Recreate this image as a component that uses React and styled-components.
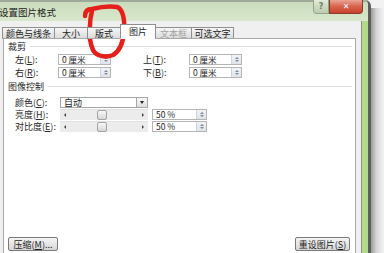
import React from "react";
import styled, { createGlobalStyle } from "styled-components";

const GlobalStyle = createGlobalStyle`
  html, body { margin: 0; padding: 0; }
  body {
    font-family: "Noto Sans CJK SC", "Liberation Sans", sans-serif;
    color: #1e1e1e;
  }
`;

const Screen = styled.div`
  position: relative;
  width: 384px;
  height: 253px;
  overflow: hidden;
  display: flex;
  align-items: flex-start;
  background: #f2f2f2;
`;

const Window = styled.div`
  width: 371px;
  flex: none;
  display: flex;
  flex-direction: column;
  border-right: 3px solid #5c5f5a;
  border-top-right-radius: 6px;
  background: #c6e4a6;
  box-sizing: border-box;
`;

const Shadow = styled.div`
  flex: 1;
  align-self: stretch;
  margin-top: 8px;
  background: linear-gradient(to right, #9b9b9b, #d9d9d9 45%, #f2f2f2);
`;

const TitleBar = styled.div`
  height: 21px;
  display: flex;
  align-items: flex-start;
  background: linear-gradient(#9ea99a 0 2px, #cbdcbd 2px, #d9e8cc 100%);
  border-top-right-radius: 5px;
`;

const Title = styled.div`
  margin-left: -1px;
  margin-top: 6px;
  font-size: 9.5px;
  line-height: 12px;
  color: #1c1c1c;
`;

const Captions = styled.div`
  margin-left: auto;
  margin-right: 5px;
  display: flex;
`;

const CaptionButton = styled.div`
  width: ${p => p.$w}px;
  height: 14px;
  box-sizing: border-box;
  display: flex;
  align-items: center;
  justify-content: center;
  font: bold 8px "DejaVu Sans", sans-serif;
  color: ${p => (p.$close ? "#fff" : "#6b7a66")};
  border: 1px solid ${p => (p.$close ? "#8d3a2c" : "#93a38c")};
  border-top: none;
  background: ${p =>
    p.$close
      ? "linear-gradient(#eaa596, #d7634d 50%, #c9412b)"
      : "linear-gradient(#e3ecda, #cbdac0 50%, #bccdb0)"};
  border-radius: ${p => (p.$close ? "0 0 4px 0" : "0 0 0 4px")};
`;

const ClientRow = styled.div`
  display: flex;
  padding-right: 6px;
  background: linear-gradient(to right, #c2e4a0, #b0dc86);
`;

const Body = styled.div`
  width: 362px;
  box-sizing: border-box;
  background: #f0f0f0;
  border-right: 1px solid #8d8d8d;
  padding: 3px 5px 0 2px;
  display: flex;
  flex-direction: column;
`;

const TabRow = styled.div`
  display: flex;
  align-items: flex-end;
  height: 15px;
  margin-bottom: -1px;
  position: relative;
  z-index: 1;
`;

const Tab = styled.div`
  width: ${p => p.$w}px;
  height: ${p => (p.$active ? 15 : 12)}px;
  box-sizing: border-box;
  display: flex;
  align-items: center;
  justify-content: center;
  font-size: 9px;
  line-height: 10px;
  color: ${p => (p.$disabled ? "#a3a3a3" : "#1e1e1e")};
  border: 1px solid #8f8f8f;
  border-bottom: ${p => (p.$active ? "1px solid #fff" : "1px solid #a9a9a9")};
  margin-right: -1px;
  background: ${p =>
    p.$active ? "#fff" : "linear-gradient(#f6f6f6, #e6e6e6 60%, #dcdcdc)"};
  padding-top: ${p => (p.$active ? 0 : 1)}px;
`;

const Panel = styled.div`
  margin-left: 1px;
  height: 222px;
  box-sizing: border-box;
  background: #fff;
  border: 1px solid #a9a9a9;
  padding: 1px 5px 8px 4px;
  display: flex;
  flex-direction: column;
`;

const SectionHead = styled.div`
  display: flex;
  align-items: center;
  gap: 4px;
  height: 12px;
  font-size: 9px;
  margin-top: ${p => p.$top || 0}px;
  &::after {
    content: "";
    flex: 1;
    height: 1px;
    margin-right: -2px;
    background: #dcdcdc;
  }
`;

const CropGrid = styled.div`
  display: grid;
  grid-template-columns: 43px 53px 32px 46px 53px;
  grid-auto-rows: 11px;
  row-gap: 2px;
  margin: 2px 0 0 7px;
`;

const ImageGrid = styled.div`
  display: grid;
  grid-template-columns: 45px 88px 4px 55px;
  grid-template-rows: 11px 11px 11px;
  row-gap: 1px;
  margin: 5px 0 0 7px;
  & > :nth-child(-n + 2) {
    margin-bottom: 4px;
  }
`;

const Label = styled.div`
  font-size: 9px;
  line-height: 11px;
  white-space: nowrap;
  color: #262626;
  u {
    text-underline-offset: 1px;
  }
`;

const SpinBox = styled.div`
  display: flex;
  height: 11px;
  box-sizing: border-box;
  border: 1px solid #b5b5b5;
  background: #fff;
`;

const SpinText = styled.div`
  flex: 1;
  padding-left: 3px;
  font-size: 8.5px;
  line-height: 9px;
  white-space: nowrap;
`;

const SpinArrows = styled.div`
  width: 9px;
  display: flex;
  flex-direction: column;
  align-items: center;
  justify-content: center;
  gap: 1px;
  background: linear-gradient(#f1f3f6, #dfe3e9);
  border-left: 1px solid #d0d4da;
`;

const Tri = styled.div`
  width: 0;
  height: 0;
  border-left: 2px solid transparent;
  border-right: 2px solid transparent;
  ${p =>
    p.$down
      ? "border-top: 2px solid #7d8a9c;"
      : "border-bottom: 2px solid #7d8a9c;"}
`;

const Select = styled.div`
  display: flex;
  height: 11px;
  box-sizing: border-box;
  border: 1px solid #a6a6a6;
  background: #fff;
  font-size: 9px;
  line-height: 9px;
`;

const SelectText = styled.div`
  flex: 1;
  padding-left: 3px;
`;

const SelectButton = styled.div`
  width: 10px;
  display: flex;
  align-items: center;
  justify-content: center;
  border-left: 1px solid #a6a6a6;
  background: linear-gradient(#f7f7f7, #dedede);
  &::before {
    content: "";
    border-left: 2.5px solid transparent;
    border-right: 2.5px solid transparent;
    border-top: 3px solid #222;
  }
`;

const Slider = styled.div`
  display: flex;
  align-items: center;
  height: 11px;
  background: #ececec;
  border-top: 1px solid #e2e2e2;
  box-sizing: border-box;
`;

const SliderArrow = styled.div`
  width: 10px;
  display: flex;
  justify-content: center;
  &::before {
    content: "";
    border-top: 2px solid transparent;
    border-bottom: 2px solid transparent;
    ${p =>
      p.$right
        ? "border-left: 2px solid #444;"
        : "border-right: 2px solid #444;"}
  }
`;

const Track = styled.div`
  flex: 1;
  display: flex;
  justify-content: center;
`;

const Thumb = styled.div`
  width: 10px;
  height: 10px;
  box-sizing: border-box;
  border: 1px solid #a3a3a3;
  border-radius: 2px;
  background: linear-gradient(#f8f8f8, #d6d6d6);
  margin-right: 4px;
`;

const ButtonRow = styled.div`
  margin-top: auto;
  display: flex;
  justify-content: space-between;
  padding-right: 0;
`;

const Button = styled.div`
  width: ${p => p.$w}px;
  height: 14px;
  box-sizing: border-box;
  display: flex;
  align-items: center;
  justify-content: center;
  font-size: 9px;
  border: 1px solid #7a7a7a;
  border-radius: 2px;
  background: linear-gradient(#f4f4f4, #e6e6e6 50%, #d5d5d5);
`;

const Mark = styled.svg`
  position: absolute;
  left: 0;
  top: 0;
  pointer-events: none;
`;

function Spin({ children }) {
  return (
    <SpinBox>
      <SpinText>{children}</SpinText>
      <SpinArrows>
        <Tri />
        <Tri $down />
      </SpinArrows>
    </SpinBox>
  );
}

function SliderBar() {
  return (
    <Slider>
      <SliderArrow />
      <Track>
        <Thumb />
      </Track>
      <SliderArrow $right />
    </Slider>
  );
}

const tabs = [
  { label: "颜色与线条", w: 53 },
  { label: "大小", w: 34 },
  { label: "版式", w: 34 },
  { label: "图片", w: 36, active: true },
  { label: "文本框", w: 37, disabled: true },
  { label: "可选文字", w: 43 },
];

export default function App() {
  return (
    <>
      <GlobalStyle />
      <Screen>
        <Window>
          <TitleBar>
            <Title>设置图片格式</Title>
            <Captions>
              <CaptionButton $w={16}>?</CaptionButton>
              <CaptionButton $w={34} $close>
                ✕
              </CaptionButton>
            </Captions>
          </TitleBar>
          <ClientRow>
            <Body>
              <TabRow>
                {tabs.map(t => (
                  <Tab
                    key={t.label}
                    $w={t.w}
                    $active={t.active}
                    $disabled={t.disabled}
                  >
                    {t.label}
                  </Tab>
                ))}
              </TabRow>
              <Panel>
                <SectionHead>裁剪</SectionHead>
                <CropGrid>
                  <Label>
                    左(<u>L</u>):
                  </Label>
                  <Spin>0 厘米</Spin>
                  <span />
                  <Label>
                    上(<u>T</u>):
                  </Label>
                  <Spin>0 厘米</Spin>
                  <Label>
                    右(<u>R</u>):
                  </Label>
                  <Spin>0 厘米</Spin>
                  <span />
                  <Label>
                    下(<u>B</u>):
                  </Label>
                  <Spin>0 厘米</Spin>
                </CropGrid>
                <SectionHead $top={2}>图像控制</SectionHead>
                <ImageGrid>
                  <Label>
                    颜色(<u>C</u>):
                  </Label>
                  <Select>
                    <SelectText>自动</SelectText>
                    <SelectButton />
                  </Select>
                  <span />
                  <span />
                  <Label>
                    亮度(<u>H</u>):
                  </Label>
                  <SliderBar />
                  <span />
                  <Spin>50 %</Spin>
                  <Label>
                    对比度(<u>E</u>):
                  </Label>
                  <SliderBar />
                  <span />
                  <Spin>50 %</Spin>
                </ImageGrid>
                <ButtonRow>
                  <Button $w={50}>
                    压缩(<u>M</u>)...
                  </Button>
                  <Button $w={55}>
                    重设图片(<u>S</u>)
                  </Button>
                </ButtonRow>
              </Panel>
            </Body>
          </ClientRow>
        </Window>
        <Shadow />
        <Mark width="384" height="253" viewBox="0 0 384 253">
          <path
            d="M85 16 C85 12 87 9 92 9 C100 7 110 6 117 7 C123 9 125 20 124 32 C123 43 120 51 113 55 C105 58 96 56 93 50 C90 43 89 33 90 25 C90 19 91 15 92 11"
            fill="none"
            stroke="#e5201a"
            strokeWidth="4.5"
            strokeLinecap="round"
            strokeLinejoin="round"
          />
        </Mark>
      </Screen>
    </>
  );
}
